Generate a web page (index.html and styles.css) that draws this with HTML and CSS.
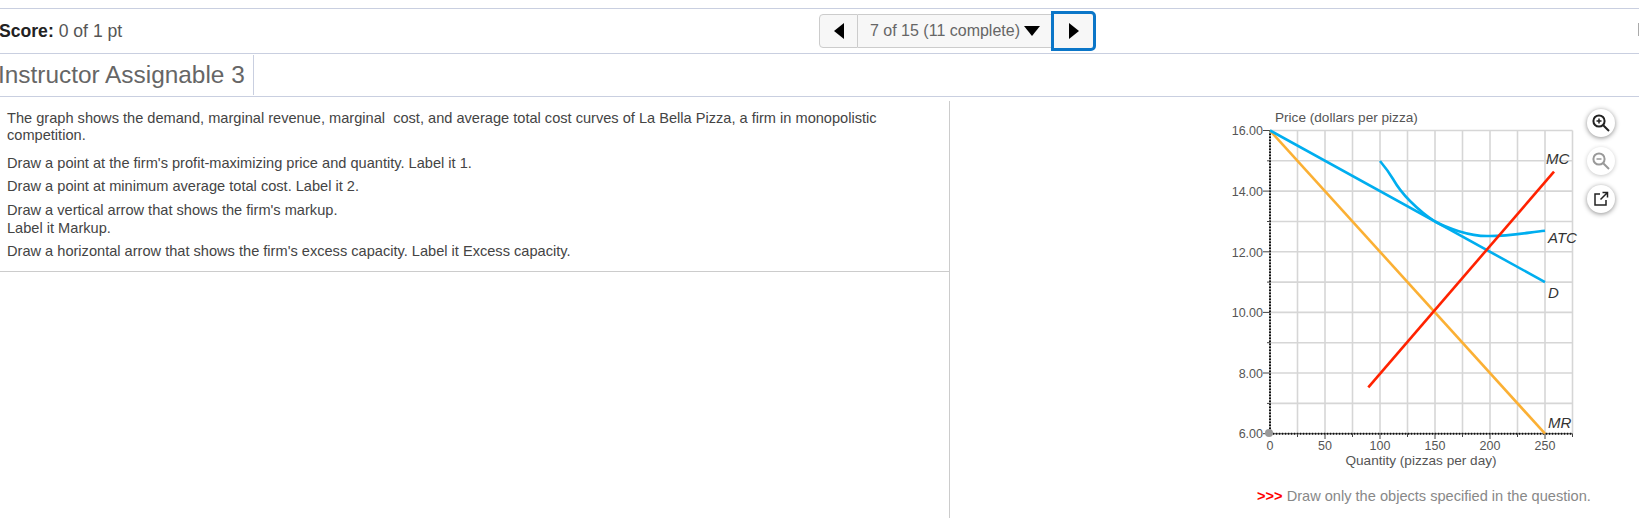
FILE: index.html
```html
<!DOCTYPE html>
<html lang="en">
<head>
  <meta charset="UTF-8">
  <title>Instructor Assignable 3</title>
  <meta name="viewport" content="width=device-width, initial-scale=1.0">
  <link rel="stylesheet" href="styles.css">
</head>
<body>
  <header class="score-bar">
    <div class="score"><strong>Score:</strong> 0 of 1 pt</div>
    <nav class="pager">
      <button class="pager-btn prev" type="button"><span class="tri tri-left"></span></button>
      <button class="pager-btn status" type="button">7 of 15 (11 complete)<span class="tri tri-down"></span></button>
      <button class="pager-btn next" type="button"><span class="tri tri-right"></span></button>
    </nav>
    <span class="edge-mark"></span>
  </header>
  <div class="title-bar">
    <h1>Instructor Assignable 3</h1>
  </div>

  <main class="question">
    <section class="prompt">
      <div class="prompt-text">
        <p class="intro">The graph shows the demand, marginal revenue, marginal&nbsp; cost, and average total cost curves of La Bella Pizza, a firm in monopolistic competition.</p>
        <p>Draw a point at the firm's profit-maximizing price and quantity. Label it 1.</p>
        <p>Draw a point at minimum average total cost. Label it 2.</p>
        <p class="loose">Draw a vertical arrow that shows the firm's markup.<br>Label it Markup.</p>
        <p>Draw a horizontal arrow that shows the firm's excess capacity. Label it Excess capacity.</p>
      </div>
    </section>

    <section class="graph-panel">
      <div class="graph-row">
        <svg class="graph" width="370" height="370" viewBox="1210 105 370 370">
          <!-- grid: 25 units on x, 1 dollar on y -->
          <path class="grid" d="M1297.5 130.5V433.7M1325 130.5V433.7M1352.5 130.5V433.7M1380 130.5V433.7M1407.5 130.5V433.7M1435 130.5V433.7M1462.5 130.5V433.7M1490 130.5V433.7M1517.5 130.5V433.7M1545 130.5V433.7M1572.5 130.5V433.7"/>
          <path class="grid" d="M1270 130.5H1572.5M1270 160.8H1572.5M1270 191.1H1572.5M1270 221.5H1572.5M1270 251.8H1572.5M1270 282.1H1572.5M1270 312.4H1572.5M1270 342.7H1572.5M1270 373H1572.5M1270 403.4H1572.5"/>

          <path class="axis" d="M1270 130.5V433.7H1572.5"/>
          <path class="axis-dots" d="M1270 130.5V433.7H1572.5"/>
          <path class="ticks" d="M1263 130.5H1270M1267 160.8H1270M1263 191.1H1270M1267 221.5H1270M1263 251.8H1270M1267 282.1H1270M1263 312.4H1270M1267 342.7H1270M1263 373H1270M1267 403.4H1270M1263 433.7H1270"/>
          <path class="ticks" d="M1297.5 433.7V437M1325 433.7V439M1352.5 433.7V437M1380 433.7V439M1407.5 433.7V437M1435 433.7V439M1462.5 433.7V437M1490 433.7V439M1517.5 433.7V437M1545 433.7V439M1572.5 433.7V437"/>

          <text class="tick-y" x="1263" y="135">16.00</text>
          <text class="tick-y" x="1263" y="196">14.00</text>
          <text class="tick-y" x="1263" y="257">12.00</text>
          <text class="tick-y" x="1263" y="317">10.00</text>
          <text class="tick-y" x="1263" y="378">8.00</text>
          <text class="tick-y" x="1263" y="438">6.00</text>
          <text class="tick-x" x="1270" y="450">0</text>
          <text class="tick-x" x="1325" y="450">50</text>
          <text class="tick-x" x="1380" y="450">100</text>
          <text class="tick-x" x="1435" y="450">150</text>
          <text class="tick-x" x="1490" y="450">200</text>
          <text class="tick-x" x="1545" y="450">250</text>
          <text class="axis-title" x="1275" y="122">Price (dollars per pizza)</text>
          <text class="axis-title middle" x="1421" y="465">Quantity (pizzas per day)</text>

          <path class="curve mr" d="M1270 130.5L1545 433.7"/>
          <path class="curve d" d="M1270 130.5L1545 282.1"/>
          <path class="curve atc" d="M1380 161C1385 167 1390 174 1393 179C1397 186 1402 193 1410 201C1418 209 1426 216 1435 221.5C1445 227 1470 237 1490 236C1510 236 1525 233 1545 230.7"/>
          <path class="curve mc" d="M1368.3 387.3L1554 171.7"/>
          <circle class="origin" cx="1269" cy="433" r="4"/>

          <text class="curve-label" x="1546" y="164">MC</text>
          <text class="curve-label" x="1548" y="243">ATC</text>
          <text class="curve-label" x="1548" y="298">D</text>
          <text class="curve-label" x="1548" y="428">MR</text>
        </svg>

        <div class="tools">
          <button class="tool" type="button">
            <svg width="20" height="20" viewBox="0 0 20 20"><circle cx="8" cy="8" r="5.6"/><path d="M12.2 12.2L18 18"/><path class="thin" d="M5.5 8H10.5M8 5.5V10.5"/></svg>
          </button>
          <button class="tool off" type="button">
            <svg width="20" height="20" viewBox="0 0 20 20"><circle cx="8" cy="8" r="5.6"/><path d="M12.2 12.2L18 18"/><path class="thin" d="M5.5 8H10.5"/></svg>
          </button>
          <button class="tool" type="button">
            <svg width="20" height="20" viewBox="0 0 20 20"><path class="thin" d="M9 5H4V16H15V11"/><path class="thin" d="M9.5 10.5L16 4M11.5 3.5H16.5V8.5"/></svg>
          </button>
        </div>
      </div>
      <p class="note"><span class="chevrons">&gt;&gt;&gt;</span> Draw only the objects specified in the question.</p>
    </section>
  </main>
</body>
</html>
```

FILE: styles.css
```css
html, body {
  height: 518px;
  overflow: hidden;
}
body {
  font-family: "Liberation Sans", Arial, sans-serif;
  background-color: #fff;
  color: #444;
  margin: 0;
  padding-top: 8px;
}
button {
  font-family: inherit;
}

/* score row */
.score-bar {
  display: flex;
  align-items: center;
  height: 44px;
  border-top: 1px solid #c9cfe0;
  border-bottom: 1px solid #c9cfe0;
  position: relative;
}
.score {
  width: 819px;
  margin-left: -1px;
  font-size: 17.6px;
  color: #555;
}
.score strong {
  color: #222;
}
.pager {
  display: flex;
  align-items: center;
  margin-left: 1px;
}
.pager-btn {
  display: flex;
  align-items: center;
  justify-content: center;
  height: 34px;
  background: #f7f7f7;
  border: 1px solid #ccc;
  color: #666;
  font-size: 16px;
  padding: 0;
}
.prev {
  width: 39px;
  border-radius: 4px 0 0 4px;
}
.status {
  width: 194px;
  border-left: none;
  border-right: none;
  gap: 4px;
}
.next {
  width: 45px;
  height: 40px;
  margin-left: -1px;
  background: #f7f7f7;
  border: 3px solid #0b76c8;
  border-radius: 0 5px 5px 0;
}
.tri {
  display: block;
  width: 0;
  height: 0;
}
.tri-left {
  border-top: 8px solid transparent;
  border-bottom: 8px solid transparent;
  border-right: 10px solid #000;
}
.tri-right {
  border-top: 8px solid transparent;
  border-bottom: 8px solid transparent;
  border-left: 10px solid #000;
}
.tri-down {
  border-left: 8px solid transparent;
  border-right: 8px solid transparent;
  border-top: 10px solid #000;
}
.edge-mark {
  position: absolute;
  right: 0;
  top: 14px;
  width: 1px;
  height: 13px;
  background: #aaa;
}

/* title row */
.title-bar {
  height: 42px;
  border-bottom: 1px solid #c9cfe0;
  display: flex;
  align-items: center;
}
h1 {
  margin: 0 0 0 -2px;
  width: 256px;
  height: 40px;
  line-height: 40px;
  font-size: 24.4px;
  font-weight: normal;
  color: #666;
  border-right: 1px solid #c9cfe0;
  box-sizing: border-box;
}

/* question */
.question {
  display: flex;
  height: 421px;
  margin-top: 4px;
}
.prompt {
  width: 949px;
  border-right: 1px solid #ccc;
}
.prompt-text {
  padding: 9px 0 11px 7px;
  border-bottom: 1px solid #ccc;
  font-size: 14.6px;
  line-height: 17px;
  color: #444;
}
.prompt-text p {
  margin: 0 0 6px;
}
.prompt-text p:last-child {
  margin-bottom: 0;
}
.prompt-text .intro {
  width: 900px;
  margin-bottom: 11px;
}
.prompt-text .loose {
  line-height: 18px;
}

.graph-panel {
  flex: 1;
  padding-left: 260px;
}
.graph-row {
  display: flex;
  gap: 7px;
  margin-top: 4px;
}
.graph {
  display: block;
  flex: none;
}
.tools {
  display: flex;
  flex-direction: column;
  gap: 10px;
  padding-top: 4px;
}
.tool {
  display: flex;
  align-items: center;
  justify-content: center;
  width: 28px;
  height: 28px;
  padding: 0;
  background: #fff;
  border: none;
  border-radius: 50%;
  box-shadow: 0 1px 5px rgba(0, 0, 0, 0.45);
}
.tool svg {
  fill: none;
  stroke: #222;
  stroke-width: 2;
}
.tool .thin {
  stroke-width: 1.5;
}
.tool.off {
  box-shadow: 0 1px 4px rgba(0, 0, 0, 0.22);
}
.tool.off svg {
  stroke: #999;
}
.note {
  margin: 13px 0 0 47px;
  font-size: 14.6px;
  color: #888;
  white-space: nowrap;
}
.chevrons {
  color: #f00;
  font-weight: bold;
}

/* graph */
.grid {
  fill: none;
  stroke: #d6d6d6;
  stroke-width: 1.6;
}
.axis {
  fill: none;
  stroke: #555;
  stroke-width: 1;
}
.axis-dots {
  fill: none;
  stroke: #111;
  stroke-width: 2;
  stroke-dasharray: 1.5 1.5;
}
.ticks {
  fill: none;
  stroke: #444;
  stroke-width: 1;
}
.tick-y, .tick-x {
  font-size: 12.5px;
  fill: #555;
}
.tick-y {
  text-anchor: end;
}
.tick-x, .middle {
  text-anchor: middle;
}
.axis-title {
  font-size: 13.6px;
  fill: #555;
}
.origin {
  fill: #999;
}
.curve {
  fill: none;
  stroke-width: 2.6;
}
.mr {
  stroke: #fbb034;
}
.d, .atc {
  stroke: #00aeef;
}
.mc {
  stroke: #ff2200;
}
.curve-label {
  font-size: 15px;
  font-style: italic;
  fill: #333;
}
```
